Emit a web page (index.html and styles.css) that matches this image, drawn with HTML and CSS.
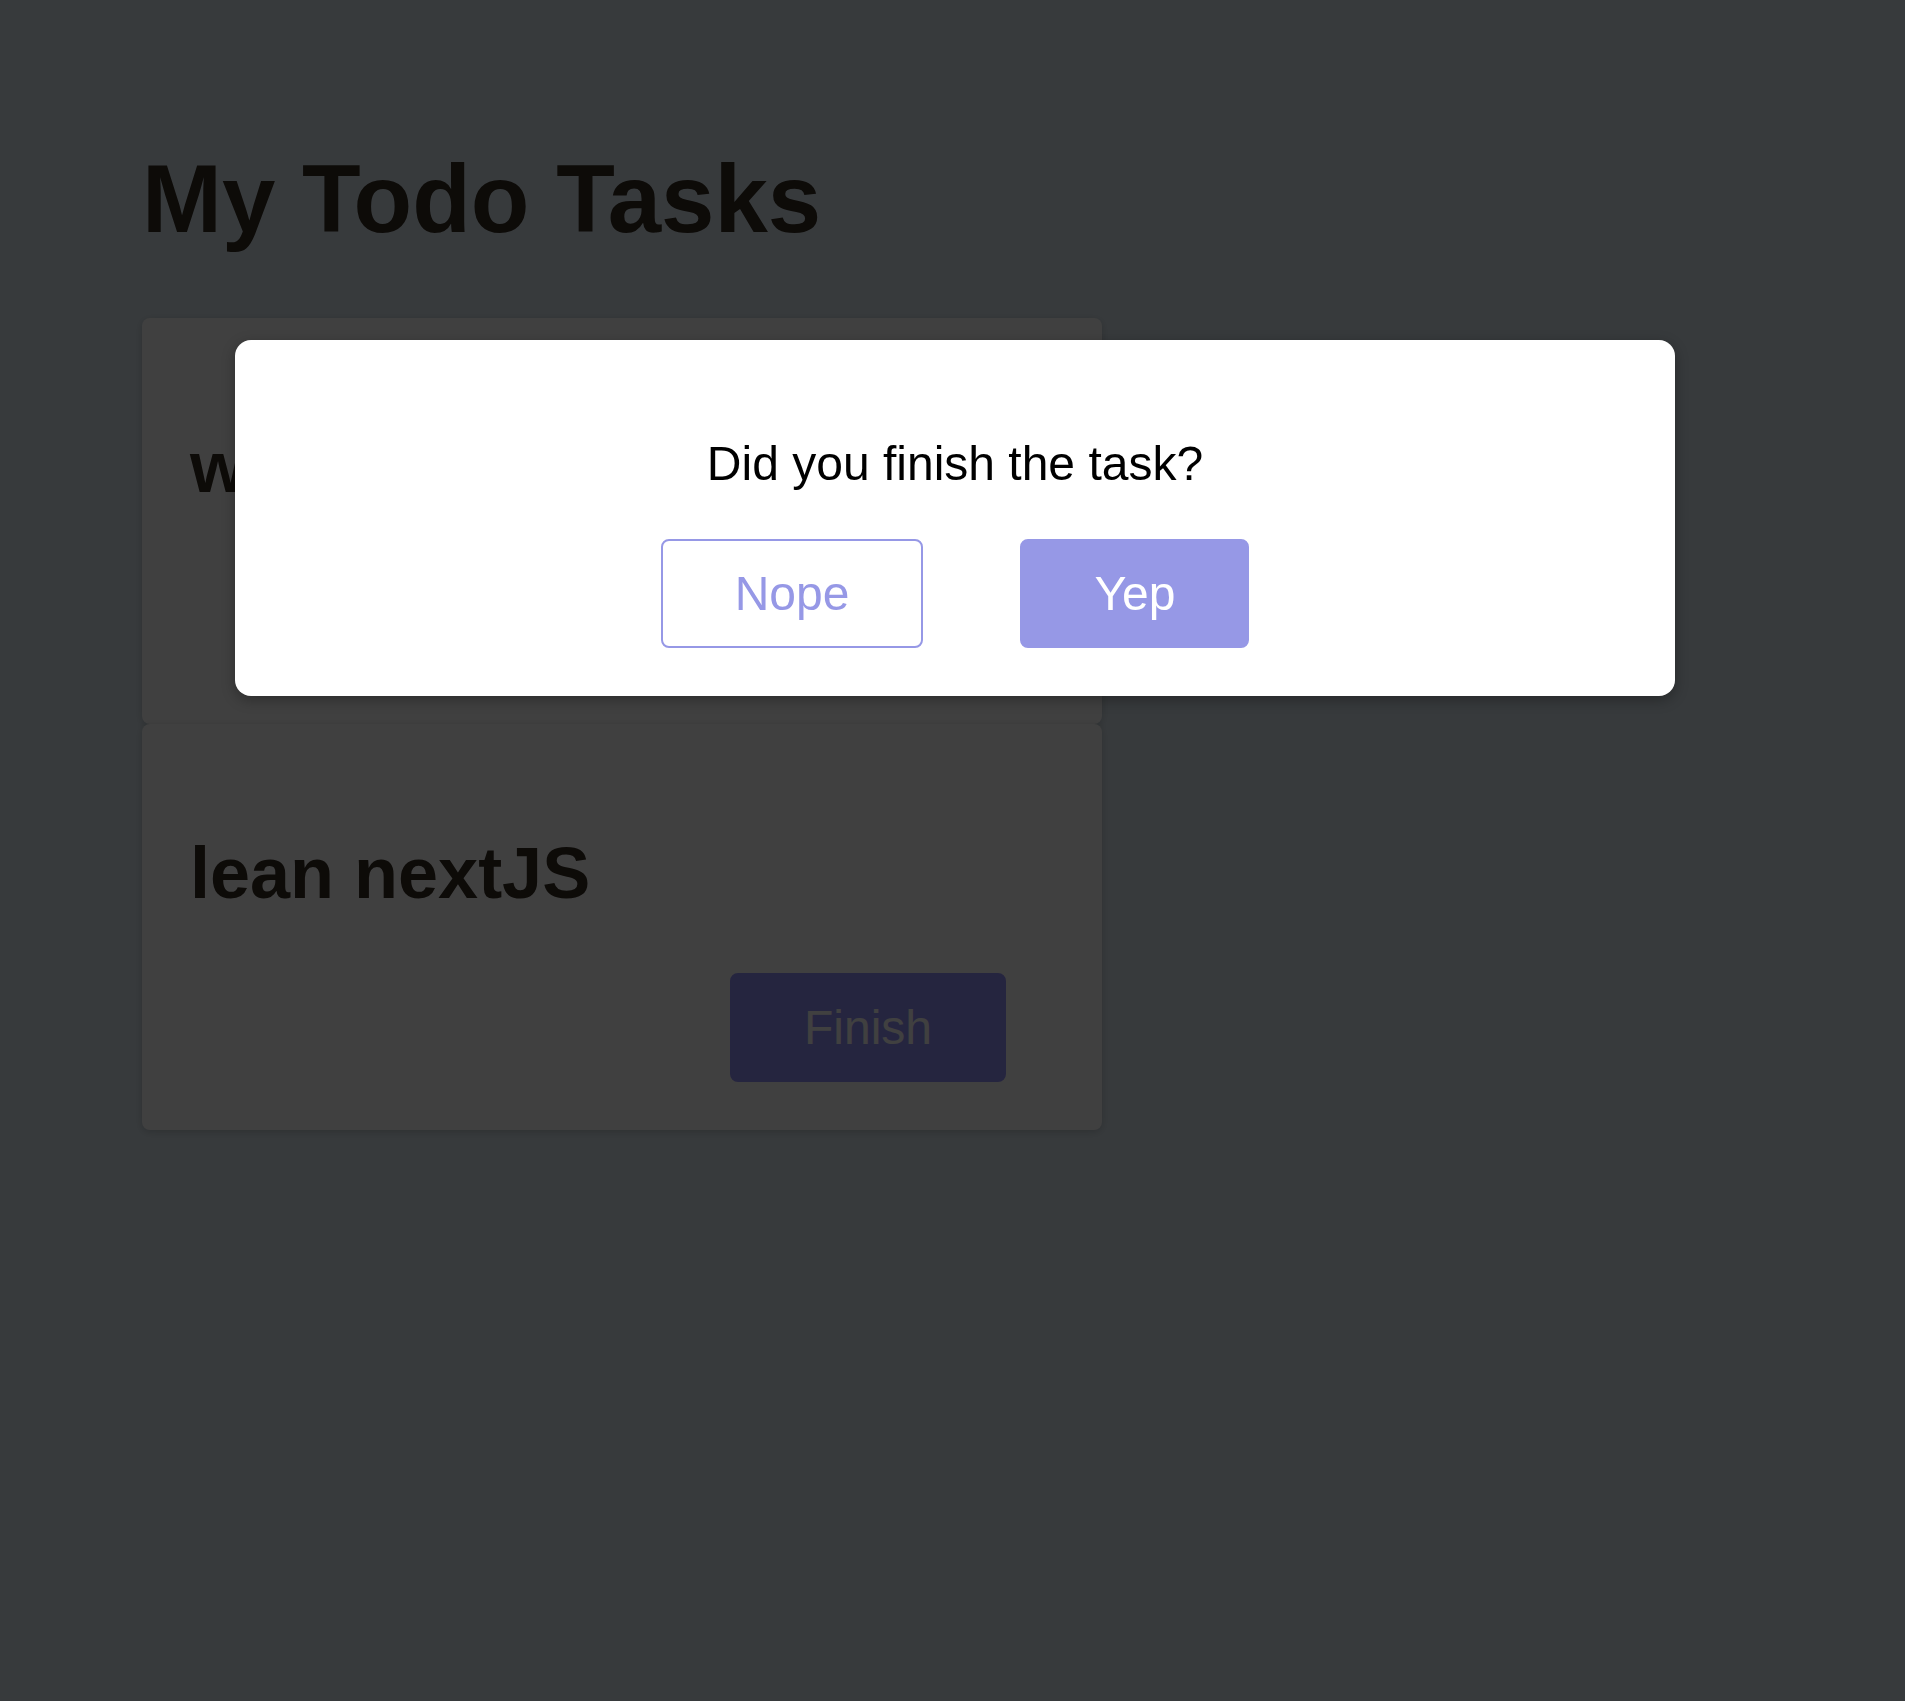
FILE: index.html
```html
<!DOCTYPE html>
<html lang="en">
<head>
<meta charset="utf-8">
<title>My Todo Tasks</title>
<link rel="stylesheet" href="styles.css">
</head>
<body>
<main class="page">
  <h1 class="page-title">My Todo Tasks</h1>
  <ul class="task-list">
    <li class="task-card">
      <h2 class="task-title">write tests</h2>
      <div class="task-actions">
        <button class="btn btn-finish" type="button">Finish</button>
      </div>
    </li>
    <li class="task-card">
      <h2 class="task-title">lean nextJS</h2>
      <div class="task-actions">
        <button class="btn btn-finish" type="button">Finish</button>
      </div>
    </li>
  </ul>
</main>
<div class="backdrop"></div>
<div class="modal" role="dialog" aria-modal="true">
  <p class="modal-text">Did you finish the task?</p>
  <div class="modal-actions">
    <button class="btn btn-outline" type="button">Nope</button>
    <button class="btn btn-solid" type="button">Yep</button>
  </div>
</div>
</body>
</html>
```
FILE: styles.css
```css
html, body {
  margin: 0;
  padding: 0;
}

body {
  background: #dce8f0;
  font-family: "Liberation Sans", Arial, sans-serif;
  min-height: 1701px;
}

.page {
  padding: 80px 0 0 142px;
}

.page-title {
  margin: 64px 0;
  font-size: 96px;
  font-weight: 700;
  line-height: 110px;
  color: #352c23;
}

.task-list {
  list-style: none;
  margin: 0;
  padding: 0;
  width: 960px;
}

.task-card {
  background: #ffffff;
  border-radius: 8px;
  box-shadow: 0 2px 8px rgba(0, 0, 0, 0.18);
  padding: 48px;
  display: flex;
  flex-direction: column;
}

.task-title {
  margin: 60px 0 58px;
  font-size: 72px;
  font-weight: 700;
  line-height: 83px;
  color: #352c23;
}

.task-actions {
  display: flex;
  justify-content: flex-end;
  padding-right: 48px;
}

.btn {
  font-family: "Liberation Sans", Arial, sans-serif;
  font-size: 48px;
  line-height: 57px;
  padding: 24px 72px;
  border: 2px solid transparent;
  border-radius: 8px;
  cursor: pointer;
}

.btn-finish {
  background: #9592fc;
  border-color: #9592fc;
  color: #ffffff;
}

.backdrop {
  position: fixed;
  inset: 0;
  background: rgba(0, 0, 0, 0.75);
}

.modal {
  position: absolute;
  top: 340px;
  left: 235px;
  width: 1440px;
  box-sizing: border-box;
  padding: 48px;
  background: #ffffff;
  border-radius: 16px;
  box-shadow: 0 4px 14px rgba(0, 0, 0, 0.3);
  text-align: center;
}

.modal-text {
  margin: 48px 0;
  font-size: 48px;
  line-height: 55px;
  color: #000000;
}

.modal-actions {
  display: flex;
  justify-content: center;
  gap: 97px;
}

.btn-outline {
  background: #ffffff;
  border-color: #9698e6;
  color: #9698e6;
}

.btn-solid {
  background: #9698e6;
  border-color: #9698e6;
  color: #ffffff;
}
```
